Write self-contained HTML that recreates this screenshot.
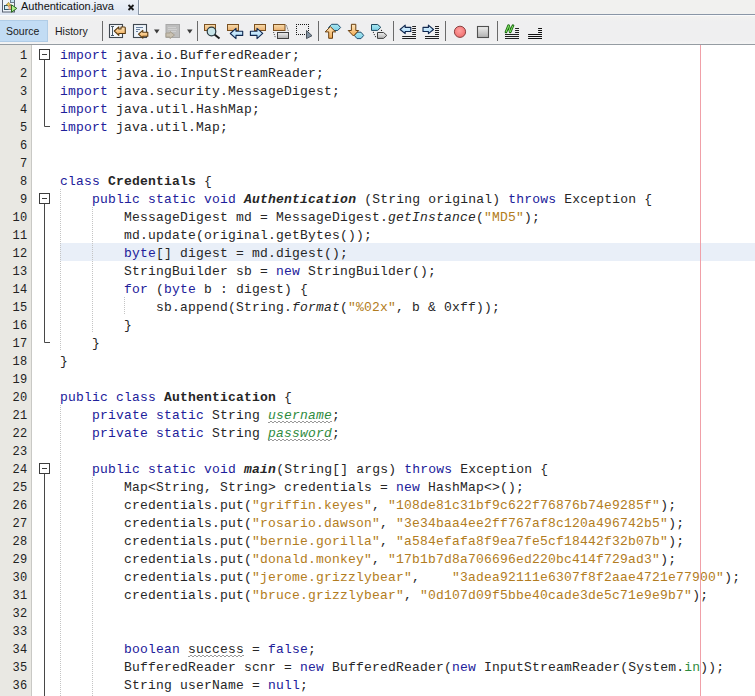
<!DOCTYPE html>
<html><head><meta charset="utf-8">
<style>
*{margin:0;padding:0;box-sizing:border-box}
html,body{width:755px;height:696px;overflow:hidden;background:#fff}
body{position:relative;font-family:"Liberation Sans",sans-serif}
#tabbar{position:absolute;left:0;top:0;width:755px;height:16px;background:#f1f1ef}
#tabline{position:absolute;left:138px;top:14px;width:617px;height:1px;background:#8a96a6}
#tabwl{position:absolute;left:0;top:15px;width:755px;height:1px;background:#fafbfc}
#tabvl{position:absolute;left:139px;top:0;width:1px;height:14px;background:#f8fafc}
#tab{position:absolute;left:0;top:0;width:139px;height:15px;background:linear-gradient(#eef2f8,#dde5f1);border-right:1px solid #8a96a6}
#tabtitle{position:absolute;left:21px;top:-1px;font-size:11px;color:#111;line-height:14px}
#toolbar{position:absolute;left:0;top:16px;width:755px;height:28px;background:linear-gradient(#f3f2ef 0,#efeff0 5px,#efeff0 24px,#f4f4f4 28px)}
#editorline{position:absolute;left:0;top:44px;width:755px;height:1px;background:#959ca2}
#src{position:absolute;left:0;top:20px;width:48px;height:22px;background:#c2dcf4;border:1px solid #b0cce6;border-left:none}
.tbtxt{position:absolute;top:20px;font-size:10.5px;line-height:22px;color:#1a1a1a}
#gutter{position:absolute;left:0;top:45px;width:31px;height:651px;background:#e9e8e3}
#gutterline{position:absolute;left:31px;top:45px;width:1px;height:651px;background:#c9c9c5}
.num{position:absolute;left:0;width:27.3px;text-align:right;font-family:"Liberation Mono",monospace;font-size:12px;letter-spacing:0.2px;line-height:18px;height:18px;padding-top:2px;color:#222}
.ln{position:absolute;left:60px;height:18px;line-height:18px;padding-top:2px;white-space:pre;font-family:"Liberation Mono",monospace;font-size:13px;letter-spacing:0.2px;color:#262626}
#hl{position:absolute;left:60px;top:243px;width:695px;height:18px;background:#e9eff8}
#margin{position:absolute;left:700px;top:45px;width:1px;height:651px;background:#f0a0a8}
.guide{position:absolute;width:1px;background:repeating-linear-gradient(to bottom,#c4c4c4 0 1px,transparent 1px 2px)}
.k{color:#20209a}
.g{color:#2e8b3e}
.s{color:#b27c20}
.f{color:#2e8b3e;font-style:italic}
.b{font-weight:bold}
.i{font-style:italic}
.bi{font-weight:bold;font-style:italic}
.w{}
.wave{position:absolute;height:2px;background-image:repeating-linear-gradient(to right,transparent 0 2px,#999 2px 4px),repeating-linear-gradient(to right,#999 0 2px,transparent 2px 4px);background-size:100% 1px,100% 1px;background-position:0 0,0 1px;background-repeat:no-repeat}
.sep{position:absolute;top:21px;width:1px;height:20px;background:#6a6a6a}
</style></head><body>
<div id="tabbar"></div>
<div id="tabline"></div><div id="tabwl"></div><div id="tabvl"></div>
<div id="tab"><div id="tabtitle">Authentication.java</div></div>
<div id="toolbar"></div>
<div id="src"></div>
<div class="tbtxt" style="left:6px">Source</div>
<div class="tbtxt" style="left:55px">History</div>
<div class="sep" style="left:102px"></div>
<div class="sep" style="left:197px"></div>
<div class="sep" style="left:318px"></div>
<div class="sep" style="left:393px"></div>
<div class="sep" style="left:445px"></div>
<div class="sep" style="left:497px"></div>
<svg id="tb" width="755" height="45" viewBox="0 0 755 45" style="position:absolute;left:0;top:0">
<defs>
<linearGradient id="og" x1="0" y1="0" x2="0" y2="1"><stop offset="0" stop-color="#ffe8c0"/><stop offset="1" stop-color="#f0a850"/></linearGradient>
<linearGradient id="or" x1="0" y1="0" x2="0" y2="1"><stop offset="0" stop-color="#f8dcac"/><stop offset="1" stop-color="#eab070"/></linearGradient>
<linearGradient id="bg" x1="0" y1="0" x2="0" y2="1"><stop offset="0" stop-color="#e0f4ff"/><stop offset="1" stop-color="#a8d8f8"/></linearGradient>
<linearGradient id="tg" x1="0" y1="0" x2="0" y2="1"><stop offset="0" stop-color="#a8e8f0"/><stop offset="1" stop-color="#80d0e8"/></linearGradient>
<linearGradient id="gg" x1="0" y1="0" x2="0" y2="1"><stop offset="0" stop-color="#eeeeee"/><stop offset="1" stop-color="#b0b0b0"/></linearGradient>
<radialGradient id="rg" cx="0.45" cy="0.4" r="0.6"><stop offset="0" stop-color="#ffa0a0"/><stop offset="1" stop-color="#f07070"/></radialGradient>
</defs>
<!-- tab icon -->
<rect x="2.5" y="-1" width="12" height="13" fill="#eef4fa" stroke="#586070" stroke-width="1"/>
<rect x="10.5" y="-1" width="4" height="3.5" fill="#c0e0f0" stroke="#506070" stroke-width="0.8"/>
<rect x="4.5" y="5.5" width="6.5" height="4" fill="#d8ecf0" stroke="#305868" stroke-width="1"/>
<path d="M8.5 2.3 L9.3 3.7 L10.7 4.5 L9.3 5.3 L8.5 6.7 L7.7 5.3 L6.3 4.5 L7.7 3.7 Z" fill="#f0d060" stroke="#9a7a20" stroke-width="0.7"/>
<rect x="8.5" y="5.5" width="2.5" height="4" fill="#f0a880" stroke="none"/>
<path d="M11.5 4.8 L16.8 8.4 L11.5 12.2 Z" fill="#b0f090" stroke="#2a6a20" stroke-width="1" stroke-linejoin="round"/>
<!-- close x -->
<path d="M128.5 5 L133.5 10 M133.5 5 L128.5 10" stroke="#1a1a1a" stroke-width="1.8"/>
<!-- icon1: box with I-beam + left arrow -->
<rect x="109.5" y="24.5" width="13" height="13" fill="#f6f9fc" stroke="#404850" stroke-width="1.1"/>
<path d="M111 26.5 H114 M112.5 26.5 V35.5 M111 35.5 H114" stroke="#485868" stroke-width="1"/>
<path d="M114.3 31 L118.8 26.8 L118.8 29 L121 29 L121 27 L124.5 27 Q125.3 27 125.3 28 L125.3 33.5 L118.8 33.5 L118.8 35.4 Z" fill="url(#og)" stroke="#5a3a10" stroke-width="1.1" stroke-linejoin="round"/>
<!-- icon2: doc with lines + arrow -->
<rect x="133.5" y="24.5" width="13" height="13" fill="#eef4fa" stroke="#404850" stroke-width="1.1"/>
<path d="M136 27.5 H143 M136 29.5 H140 M136 31.5 H138" stroke="#6880a0" stroke-width="1"/>
<path d="M138.5 34.2 L142.8 30.3 L142.8 32.2 L147.8 32.2 L147.8 36.3 L142.8 36.3 L142.8 38.2 Z" fill="url(#og)" stroke="#5a3a10" stroke-width="1.1" stroke-linejoin="round"/>
<path d="M154 29.5 H159.5 L156.75 33.5 Z" fill="#3a3a3a"/>
<!-- icon3 disabled -->
<rect x="166" y="24.5" width="13.5" height="13" fill="#bdbdbd" stroke="#a8a8a8" stroke-width="1"/>
<path d="M168 27.5 H176 M168 29.5 H177 M169 31.5 H176" stroke="#d0d0d0" stroke-width="1"/>
<path d="M174.5 35 L170 31.5 L170 33 L166 33 L166 37 L170 37 L170 38.5 Z" fill="#c8c0b0" stroke="#a8a090" stroke-width="1"/>
<path d="M187 29.5 H192.5 L189.75 33.5 Z" fill="#3a3a3a"/>
<!-- search icon -->
<rect x="204.5" y="24.5" width="11" height="6" fill="url(#or)" stroke="#7a5020" stroke-width="1"/>
<line x1="214.5" y1="34.5" x2="219.5" y2="38.5" stroke="#1a1a1a" stroke-width="2"/>
<circle cx="211.5" cy="31.5" r="4.3" fill="#c8e4e8" stroke="#2a3a40" stroke-width="1.2"/>
<!-- prev occurrence -->
<rect x="227.5" y="24.5" width="11" height="6" fill="url(#or)" stroke="#7a5020" stroke-width="1"/>
<path d="M230.3 33.5 L236 28.3 L236 31.3 L242.7 31.3 L242.7 35.4 L236 35.4 L236 38.6 Z" fill="url(#bg)" stroke="#102850" stroke-width="1.1" stroke-linejoin="round"/>
<!-- next occurrence -->
<rect x="254.5" y="24.5" width="11" height="6" fill="url(#or)" stroke="#7a5020" stroke-width="1"/>
<path d="M262.7 33.4 L257 28.3 L257 31.3 L250.4 31.3 L250.4 35.4 L257 35.4 L257 38.6 Z" fill="url(#bg)" stroke="#102850" stroke-width="1.1" stroke-linejoin="round"/>
<!-- icon 4: two rects -->
<rect x="273.5" y="24.5" width="11.5" height="6" fill="url(#or)" stroke="#7a5020" stroke-width="1"/>
<rect x="277.5" y="32.5" width="11" height="6" fill="url(#gg)" stroke="#404040" stroke-width="1"/>
<path d="M286.5 25.5 L288.5 31.5 M273.5 32 L275.5 38" stroke="#404040" stroke-width="1" stroke-dasharray="1,1.2"/>
<!-- icon 5: dotted rect + cursor -->
<path d="M296 24h1v1h-1z M296 34h1v1h-1z M298 24h1v1h-1z M298 34h1v1h-1z M300 24h1v1h-1z M300 34h1v1h-1z M302 24h1v1h-1z M302 34h1v1h-1z M304 24h1v1h-1z M304 34h1v1h-1z M306 24h1v1h-1z M306 34h1v1h-1z M308 24h1v1h-1z M308 34h1v1h-1z M296 26h1v1h-1z M308 26h1v1h-1z M296 28h1v1h-1z M308 28h1v1h-1z M296 30h1v1h-1z M308 30h1v1h-1z M296 32h1v1h-1z M308 32h1v1h-1z" fill="#181818"/>
<path d="M306.5 30.5 L312 35.7 L306.5 38.6 Z" fill="#8090a0" stroke="#404850" stroke-width="0.9"/>
<!-- up arrow + tag -->
<path d="M331.6 24.3 L337.7 24.3 L340.6 27.5 L337.7 30.5 L331.6 30.5 L328.5 27.5 Z" fill="url(#tg)" stroke="#205070" stroke-width="1"/>
<path d="M330.4 26.7 L335.7 31.9 L332.5 31.9 L332.5 38.3 L328.7 38.3 L328.7 31.9 L325.2 31.9 Z" fill="url(#og)" stroke="#6a4010" stroke-width="1" stroke-linejoin="round"/>
<!-- down arrow + tag -->
<path d="M357 32.2 L361 32.2 L363.7 35.4 L361 38.6 L357 38.6 L354.3 35.4 Z" fill="url(#tg)" stroke="#205070" stroke-width="1"/>
<path d="M351.4 24.3 L355.8 24.3 L355.8 30.5 L358.7 30.5 L353.5 36 L348.2 30.5 L351.4 30.5 Z" fill="url(#og)" stroke="#6a4010" stroke-width="1" stroke-linejoin="round"/>
<!-- tag pair -->
<path d="M371.5 24.5 L377.7 24.5 L380.8 27.3 L377.7 30.4 L371.5 30.4 Z" fill="url(#tg)" stroke="#204a60" stroke-width="1"/>
<path d="M377.5 32.5 L383.6 32.5 L386.8 35.4 L383.6 38.4 L377.5 38.4 Z" fill="url(#gg)" stroke="#404040" stroke-width="1"/>
<circle cx="373.4" cy="32.3" r="0.6" fill="#202020"/><circle cx="374.3" cy="34.6" r="0.6" fill="#202020"/><circle cx="375.5" cy="36.6" r="0.6" fill="#202020"/><circle cx="381.5" cy="30.4" r="0.6" fill="#202020"/>
<!-- shift left -->
<path d="M400.1 29.5 L405.2 25.2 L405.2 27.4 L410.8 27.4 L410.8 31.5 L405.2 31.5 L405.2 33.6 Z" fill="url(#bg)" stroke="#102850" stroke-width="1.1" stroke-linejoin="round"/>
<path d="M412.2 26.5 H416 M412.2 28.5 H416 M412.2 30.5 H416 M412.2 32.5 H416 M412.2 34.5 H416 M402.2 36.5 H416 M402.2 38.5 H416" stroke="#202020" stroke-width="1"/>
<!-- shift right -->
<path d="M433.5 29.5 L428.4 25.2 L428.4 27.4 L423 27.4 L423 31.5 L428.4 31.5 L428.4 33.6 Z" fill="url(#bg)" stroke="#102850" stroke-width="1.1" stroke-linejoin="round"/>
<path d="M435 26.5 H439 M435 28.5 H439 M435 30.5 H439 M435 32.5 H439 M435 34.5 H439 M425 36.5 H439 M425 38.5 H439" stroke="#202020" stroke-width="1"/>
<!-- record -->
<circle cx="460" cy="31.8" r="5.6" fill="url(#rg)" stroke="#8a4040" stroke-width="1"/>
<!-- stop -->
<rect x="477.5" y="26.5" width="11" height="11" fill="url(#gg)" stroke="#505050" stroke-width="1.1"/>
<!-- N icon -->
<path d="M506 32 L508.6 25.6 L510.2 32 L513 25.6" fill="none" stroke="#1a6a10" stroke-width="2.6" stroke-linejoin="round" stroke-linecap="round"/>
<path d="M506 32 L508.6 25.6 L510.2 32 L513 25.6" fill="none" stroke="#90f070" stroke-width="0.9" stroke-linejoin="round"/>
<path d="M515.1 28.5 H519 M515.1 30.5 H519 M515.1 32.5 H519 M505 34.5 H519 M505 36.5 H519 M505 38.5 H519" stroke="#202020" stroke-width="1"/>
<!-- last icon -->
<path d="M538.1 28.5 H542 M538.1 30.5 H542 M538.1 32.5 H542 M528.1 34.5 H542 M528.1 36.5 H542 M528.1 38.5 H542" stroke="#101010" stroke-width="1.1"/>
</svg>

<div id="editorline"></div>
<div id="gutter"></div>
<div id="gutterline"></div>
<div class="num" style="top:45px">1</div>
<div class="num" style="top:63px">2</div>
<div class="num" style="top:81px">3</div>
<div class="num" style="top:99px">4</div>
<div class="num" style="top:117px">5</div>
<div class="num" style="top:135px">6</div>
<div class="num" style="top:153px">7</div>
<div class="num" style="top:171px">8</div>
<div class="num" style="top:189px">9</div>
<div class="num" style="top:207px">10</div>
<div class="num" style="top:225px">11</div>
<div class="num" style="top:243px">12</div>
<div class="num" style="top:261px">13</div>
<div class="num" style="top:279px">14</div>
<div class="num" style="top:297px">15</div>
<div class="num" style="top:315px">16</div>
<div class="num" style="top:333px">17</div>
<div class="num" style="top:351px">18</div>
<div class="num" style="top:369px">19</div>
<div class="num" style="top:387px">20</div>
<div class="num" style="top:405px">21</div>
<div class="num" style="top:423px">22</div>
<div class="num" style="top:441px">23</div>
<div class="num" style="top:459px">24</div>
<div class="num" style="top:477px">25</div>
<div class="num" style="top:495px">26</div>
<div class="num" style="top:513px">27</div>
<div class="num" style="top:531px">28</div>
<div class="num" style="top:549px">29</div>
<div class="num" style="top:567px">30</div>
<div class="num" style="top:585px">31</div>
<div class="num" style="top:603px">32</div>
<div class="num" style="top:621px">33</div>
<div class="num" style="top:639px">34</div>
<div class="num" style="top:657px">35</div>
<div class="num" style="top:675px">36</div>
<svg width="60" height="651" viewBox="0 45 60 651" style="position:absolute;left:0;top:45px">
<g fill="#fff" stroke="#3c3c3c" stroke-width="1">
<rect x="39.5" y="49.5" width="10" height="10"/>
<rect x="39.5" y="193.5" width="10" height="10"/>
<rect x="39.5" y="463.5" width="10" height="10"/>
</g>
<path d="M42 54.5 H47 M42 198.5 H47 M42 468.5 H47" stroke="#3c3c3c" stroke-width="1"/>
<path d="M44.5 60 V126.5 H50 M44.5 204 V342.5 H50 M44.5 474 V700" fill="none" stroke="#484848" stroke-width="1"/>
</svg>
<div id="hl"></div>
<div class="guide" style="left:60px;top:189px;height:162px"></div>
<div class="guide" style="left:92px;top:207px;height:126px"></div>
<div class="guide" style="left:124px;top:297px;height:18px"></div>
<div class="guide" style="left:60px;top:405px;height:306px"></div>
<div class="guide" style="left:92px;top:477px;height:234px"></div>
<div class="ln" style="top:45px"><span class="k">import</span> java.io.BufferedReader;</div>
<div class="ln" style="top:63px"><span class="k">import</span> java.io.InputStreamReader;</div>
<div class="ln" style="top:81px"><span class="k">import</span> java.security.MessageDigest;</div>
<div class="ln" style="top:99px"><span class="k">import</span> java.util.HashMap;</div>
<div class="ln" style="top:117px"><span class="k">import</span> java.util.Map;</div>
<div class="ln" style="top:135px"></div>
<div class="ln" style="top:153px"></div>
<div class="ln" style="top:171px"><span class="k">class</span> <span class="b">Credentials</span> {</div>
<div class="ln" style="top:189px">    <span class="k">public</span> <span class="k">static</span> <span class="k">void</span> <span class="bi">Authentication</span> (String original) <span class="k">throws</span> Exception {</div>
<div class="ln" style="top:207px">        MessageDigest md = MessageDigest.<span class="i">getInstance</span>(<span class="s">&quot;MD5&quot;</span>);</div>
<div class="ln" style="top:225px">        md.update(original.getBytes());</div>
<div class="ln" style="top:243px">        <span class="k">byte</span>[] digest = md.digest();</div>
<div class="ln" style="top:261px">        StringBuilder sb = <span class="k">new</span> StringBuilder();</div>
<div class="ln" style="top:279px">        <span class="k">for</span> (<span class="k">byte</span> b : digest) {</div>
<div class="ln" style="top:297px">            sb.append(String.<span class="i">format</span>(<span class="s">&quot;%02x&quot;</span>, b &amp; 0xff));</div>
<div class="ln" style="top:315px">        }</div>
<div class="ln" style="top:333px">    }</div>
<div class="ln" style="top:351px">}</div>
<div class="ln" style="top:369px"></div>
<div class="ln" style="top:387px"><span class="k">public</span> <span class="k">class</span> <span class="b">Authentication</span> {</div>
<div class="ln" style="top:405px">    <span class="k">private</span> <span class="k">static</span> String <span class="f">username</span>;</div>
<div class="ln" style="top:423px">    <span class="k">private</span> <span class="k">static</span> String <span class="f">password</span>;</div>
<div class="ln" style="top:441px"></div>
<div class="ln" style="top:459px">    <span class="k">public</span> <span class="k">static</span> <span class="k">void</span> <span class="bi">main</span>(String[] args) <span class="k">throws</span> Exception {</div>
<div class="ln" style="top:477px">        Map&lt;String, String&gt; credentials = <span class="k">new</span> HashMap&lt;&gt;();</div>
<div class="ln" style="top:495px">        credentials.put(<span class="s">&quot;griffin.keyes&quot;</span>, <span class="s">&quot;108de81c31bf9c622f76876b74e9285f&quot;</span>);</div>
<div class="ln" style="top:513px">        credentials.put(<span class="s">&quot;rosario.dawson&quot;</span>, <span class="s">&quot;3e34baa4ee2ff767af8c120a496742b5&quot;</span>);</div>
<div class="ln" style="top:531px">        credentials.put(<span class="s">&quot;bernie.gorilla&quot;</span>, <span class="s">&quot;a584efafa8f9ea7fe5cf18442f32b07b&quot;</span>);</div>
<div class="ln" style="top:549px">        credentials.put(<span class="s">&quot;donald.monkey&quot;</span>, <span class="s">&quot;17b1b7d8a706696ed220bc414f729ad3&quot;</span>);</div>
<div class="ln" style="top:567px">        credentials.put(<span class="s">&quot;jerome.grizzlybear&quot;</span>,    <span class="s">&quot;3adea92111e6307f8f2aae4721e77900&quot;</span>);</div>
<div class="ln" style="top:585px">        credentials.put(<span class="s">&quot;bruce.grizzlybear&quot;</span>, <span class="s">&quot;0d107d09f5bbe40cade3de5c71e9e9b7&quot;</span>);</div>
<div class="ln" style="top:603px"></div>
<div class="ln" style="top:621px"></div>
<div class="ln" style="top:639px">        <span class="k">boolean</span> <span class="w">success</span> = <span class="k">false</span>;</div>
<div class="ln" style="top:657px">        BufferedReader scnr = <span class="k">new</span> BufferedReader(<span class="k">new</span> InputStreamReader(System.<span class="g">in</span>));</div>
<div class="ln" style="top:675px">        String userName = <span class="k">null</span>;</div>
<div class="wave" style="left:268px;top:421px;width:64px"></div>
<div class="wave" style="left:268px;top:439px;width:64px"></div>
<div class="wave" style="left:188px;top:655px;width:56px"></div>
<div id="margin"></div>
</body></html>
